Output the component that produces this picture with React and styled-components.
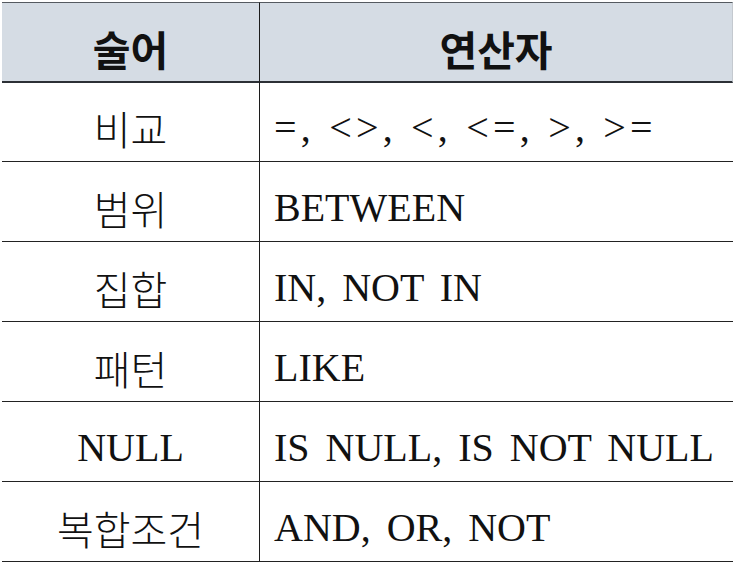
import React from 'react'
import styled, { createGlobalStyle } from 'styled-components'

const GlobalStyle = createGlobalStyle`
  html, body {
    margin: 0;
    padding: 0;
    background: #ffffff;
  }
`

const Page = styled.div`
  width: 733px;
  height: 562px;
  overflow: hidden;
  padding: 2px 0 0 2px;
  box-sizing: border-box;
`

const Table = styled.div`
  display: grid;
  grid-template-columns: 258px 1fr;
  grid-auto-rows: 80px;
`

const HeadCell = styled.div`
  display: flex;
  align-items: center;
  justify-content: center;
  box-sizing: border-box;
  height: 81px;
  padding-top: 12px;
  background: #d5dce4;
  border-top: 1px solid #555a60;
  border-bottom: 2px solid #2c3036;
  border-right: ${p => (p.first ? '1px solid #1c1c1c' : '1px solid #c4c9cf')};
  font-family: 'Noto Sans CJK KR', sans-serif;
  font-weight: 700;
  font-size: 41px;
  color: #111;
`

const Cell = styled.div`
  display: flex;
  align-items: center;
  justify-content: ${p => (p.first ? 'center' : 'flex-start')};
  box-sizing: border-box;
  padding: ${p => (p.first ? '12px 0 0 0' : '12px 0 0 14px')};
  border-bottom: 1px solid #222;
  border-right: ${p => (p.first ? '1px solid #1c1c1c' : 'none')};
  font-family: 'Liberation Serif', 'Noto Sans CJK KR', serif;
  font-weight: 300;
  font-size: 40px;
  letter-spacing: ${p => (p.wide ? '4.2px' : '0')};
  word-spacing: ${p => (p.wide ? '0' : '6px')};
  color: #111;
  white-space: nowrap;
`

const rows = [
  ['비교', '=, <>, <, <=, >, >=', true],
  ['범위', 'BETWEEN'],
  ['집합', 'IN, NOT IN'],
  ['패턴', 'LIKE'],
  ['NULL', 'IS NULL, IS NOT NULL'],
  ['복합조건', 'AND, OR, NOT'],
]

export default function App() {
  return (
    <Page>
      <GlobalStyle />
      <Table>
        <HeadCell first>술어</HeadCell>
        <HeadCell>연산자</HeadCell>
        {rows.map(([name, ops, wide]) => (
          <React.Fragment key={name}>
            <Cell first>{name}</Cell>
            <Cell wide={wide}>{ops}</Cell>
          </React.Fragment>
        ))}
      </Table>
    </Page>
  )
}
